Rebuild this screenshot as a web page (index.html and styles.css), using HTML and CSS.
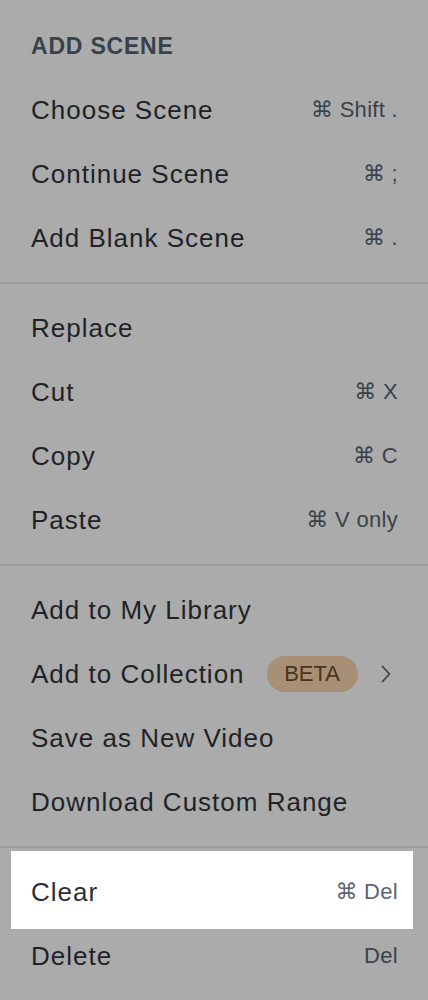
FILE: index.html
```html
<!DOCTYPE html>
<html>
<head>
<meta charset="utf-8">
<link rel="stylesheet" href="styles.css">
</head>
<body>
<div class="menu">
  <div class="section">
    <div class="item heading">ADD SCENE</div>
    <div class="item"><span class="label">Choose Scene</span><span class="key">⌘ Shift .</span></div>
    <div class="item"><span class="label">Continue Scene</span><span class="key">⌘ ;</span></div>
    <div class="item"><span class="label">Add Blank Scene</span><span class="key">⌘ .</span></div>
  </div>
  <div class="section">
    <div class="item"><span class="label">Replace</span></div>
    <div class="item"><span class="label">Cut</span><span class="key">⌘ X</span></div>
    <div class="item"><span class="label">Copy</span><span class="key">⌘ C</span></div>
    <div class="item"><span class="label">Paste</span><span class="key">⌘ V only</span></div>
  </div>
  <div class="section">
    <div class="item"><span class="label">Add to My Library</span></div>
    <div class="item">
      <span class="label-group"><span class="label">Add to Collection</span><span class="badge">BETA</span></span>
      <svg class="chevron" width="12" height="20" viewBox="0 0 12 20"><path d="M2.5 2.5 L9.5 10 L2.5 17.5" fill="none" stroke="#3c444c" stroke-width="1.8" stroke-linecap="round" stroke-linejoin="round"/></svg>
    </div>
    <div class="item"><span class="label">Save as New Video</span></div>
    <div class="item"><span class="label">Download Custom Range</span></div>
  </div>
  <div class="section">
    <div class="item active"><span class="label">Clear</span><span class="key">⌘ Del</span></div>
    <div class="item"><span class="label">Delete</span><span class="key">Del</span></div>
  </div>
</div>
</body>
</html>
```
FILE: styles.css
```css
html, body {
  margin: 0;
  padding: 0;
  background: #ababab;
}
body {
  font-family: "Liberation Sans", "DejaVu Sans", sans-serif;
  color: #1f2327;
}
.menu {
  padding-top: 2px;
}
.section {
  padding: 12px 0;
  border-bottom: 2px solid #9c9c9c;
}
.section:last-child {
  border-bottom: none;
}
.item {
  position: relative;
  height: 64px;
  display: flex;
  align-items: center;
  justify-content: space-between;
  padding: 0 30px 0 31px;
}
.label {
  position: relative;
  font-size: 26px;
  letter-spacing: 1px;
  color: #1f2327;
}
.heading {
  font-size: 23px;
  font-weight: 700;
  color: #38424c;
  letter-spacing: 0.8px;
}
.key {
  position: relative;
  font-size: 22px;
  letter-spacing: 0.3px;
  color: #3a424a;
}
.label-group {
  display: flex;
  align-items: center;
  gap: 22px;
}
.badge {
  display: inline-flex;
  align-items: center;
  justify-content: center;
  width: 91px;
  height: 36px;
  border-radius: 18px;
  background: #a89077;
  color: #4a3418;
  font-size: 22px;
}
.chevron {
  margin-right: 6px;
}
.active::before {
  content: "";
  position: absolute;
  left: 11px;
  right: 15px;
  top: -9px;
  bottom: -5px;
  background: #ffffff;
}
.active .label {
  color: #2b3036;
}
.active .key {
  color: #5a6570;
}
```
